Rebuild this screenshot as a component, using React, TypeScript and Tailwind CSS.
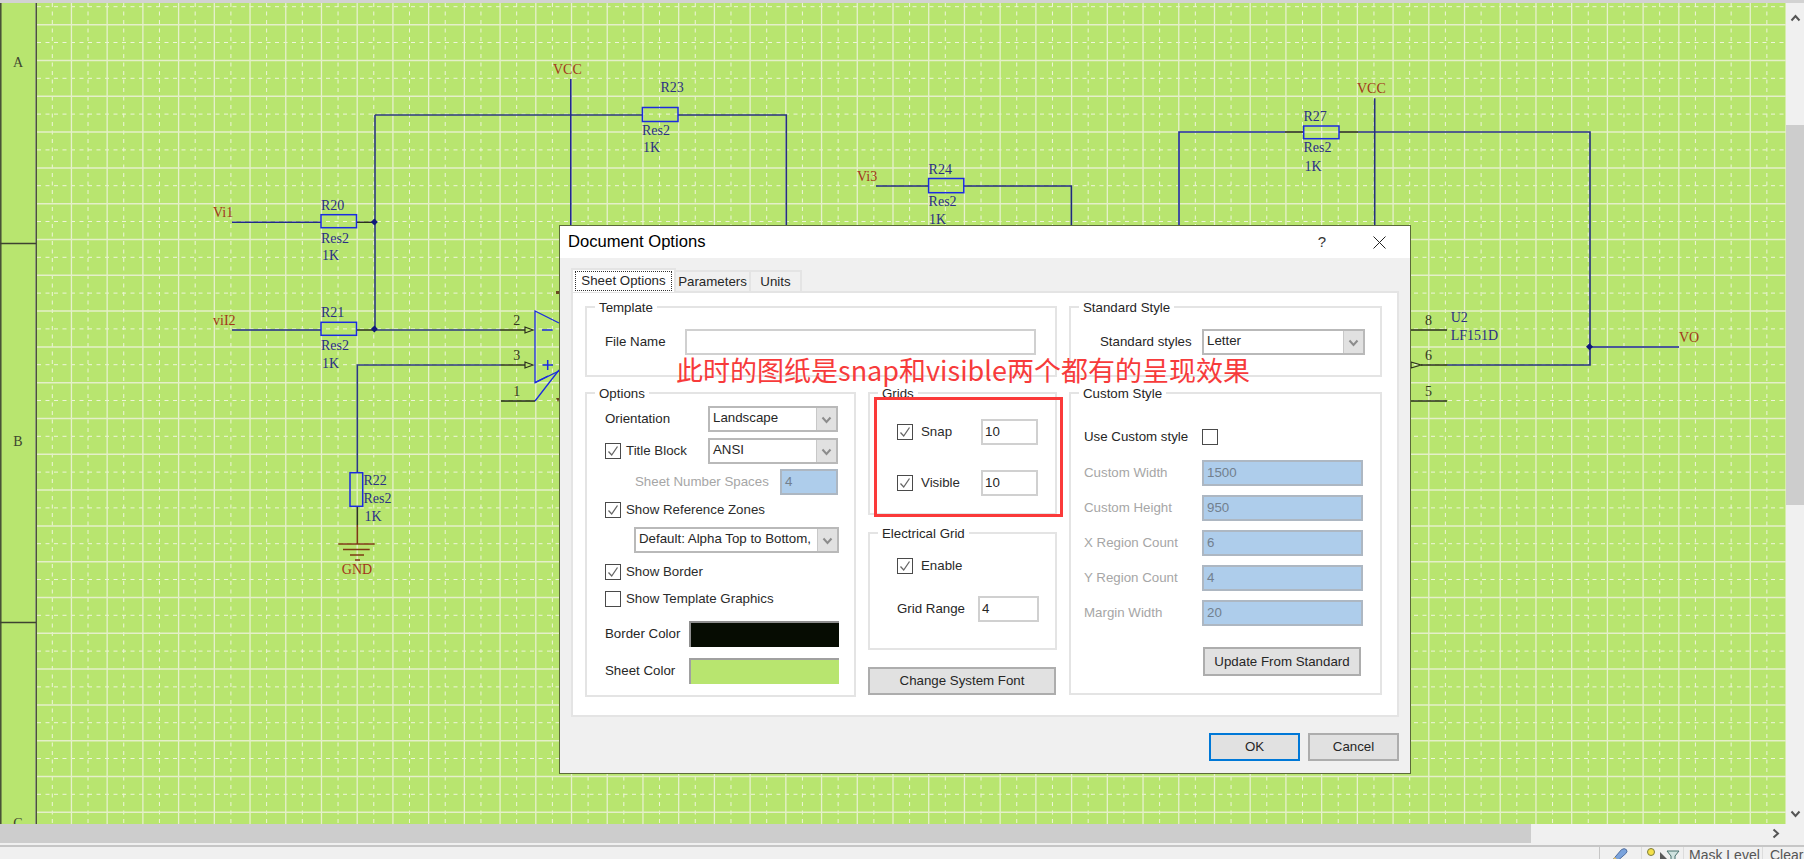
const ui = { fontFamily: '"Liberation Sans", Arial, sans-serif' };

const W = 1786;
const H = 824;
const vSolid = Array.from({ length: 50 }, (_, i) => 35.72 * (i + 1));
const vDash = Array.from({ length: 49 }, (_, i) => 52.3 + 35.72 * i);
const hSolid = Array.from({ length: 23 }, (_, i) => 24.7 + 35.8 * i);
const hDash = Array.from({ length: 23 }, (_, i) => 6.7 + 35.8 * i);

const NAVY = "#2a2f85";
const BRIGHT = "#1a2be0";
const RED = "#a2351a";
const DARK = "#33381f";

function Res({ x, y, w = 35.5, h = 13 }: { x: number; y: number; w?: number; h?: number }) {
  return <rect x={x} y={y} width={w} height={h} fill="none" stroke={BRIGHT} strokeWidth="1.5" />;
}

function Junction({ x, y }: { x: number; y: number }) {
  return <path d={`M${x - 3.5} ${y} L${x} ${y - 3.5} L${x + 3.5} ${y} L${x} ${y + 3.5} Z`} fill="#10187a" />;
}

function Label({ x, y, c = NAVY, t, anchor }: { x: number; y: number; c?: string; t: string; anchor?: "middle" }) {
  return (
    <text x={x} y={y + 1} fill={c} fontSize="14" fontFamily='"Liberation Serif", serif' textAnchor={anchor} dominantBaseline="middle">
      {t}
    </text>
  );
}

function Schematic() {
  return (
    <svg width={W} height={H - 3} viewBox={`0 3 ${W} ${H - 3}`} className="block">
      {vDash.map((x) => (
        <line key={x} x1={x} x2={x} y1={3} y2={H} stroke="#eef5d9" strokeWidth="1" strokeDasharray="4 4.5" />
      ))}
      {hDash.map((y) => (
        <line key={y} x1={37} x2={W} y1={y} y2={y} stroke="#eef5d9" strokeWidth="1" strokeDasharray="4 4.5" />
      ))}
      {vSolid.map((x) => (
        <line key={x} x1={x} x2={x} y1={3} y2={H} stroke="#e6f0cd" strokeWidth="1.3" />
      ))}
      {hSolid.map((y) => (
        <line key={y} x1={37} x2={W} y1={y} y2={y} stroke="#e4efc8" strokeWidth="1.5" />
      ))}

      {/* reference zones */}
      <g stroke="#3d4230" strokeWidth="1.4" fill="none">
        <line x1={0.8} x2={0.8} y1={3} y2={H} />
        <line x1={36.2} x2={36.2} y1={3} y2={H} />
        <line x1={0} x2={36} y1={243.5} y2={243.5} />
        <line x1={0} x2={36} y1={622.5} y2={622.5} />
      </g>
      <g fill="#3f4530" fontSize="14" fontFamily='"Liberation Serif", serif' textAnchor="middle" dominantBaseline="middle">
        <text x={18} y={64}>A</text>
        <text x={18} y={443}>B</text>
        <text x={18} y={825}>C</text>
      </g>

      {/* wires */}
      <g fill="none" strokeWidth="1.6">
        <path d="M232 222.3H321M232 330H321" stroke="#1f2a8a" />
        <path d="M357 222.3H375M357 330H375" stroke="#2a2f20" />
        <path d="M375 115V330H500M375 115H642" stroke="#2c3a80" />
        <path d="M500 330H525M501 365H525" stroke="#2e3320" />
        <path d="M357.3 472.7V365H501" stroke="#2c3a80" />
        <path d="M357.3 506V525" stroke="#2e3320" />
        <path d="M357.3 525V544" stroke="#7c3a12" />
        <path d="M338.3 544H374.7M343 549.5H369.7M350 555H364M355 560H360" stroke="#7c3a12" />
        <path d="M501 401H535" stroke="#1f2415" />
        <path d="M678 115H786.3V225" stroke="#27307f" />
        <path d="M570.8 79V225" stroke="#1f2a8a" />
        <path d="M876 186H928.6M964 186H1071.4V225" stroke="#1f2a7e" />
        <path d="M1179 225V132H1285" stroke="#1f2a9a" />
        <path d="M1285 132H1303.7M1339 132H1358" stroke="#1f2415" />
        <path d="M1358 132H1590V365H1447" stroke="#25307f" />
        <path d="M1374.7 98.3V225" stroke="#25307f" />
        <path d="M1590 347H1679" stroke="#1a2590" />
        <path d="M1411 330H1447M1421 365H1447M1411 401H1447" stroke="#2a2f1c" />
      </g>

      <Res x={321} y={214.7} />
      <Res x={321} y={322.3} />
      <Res x={350} y={472.7} w={12.7} h={33.6} />
      <Res x={642.4} y={107.5} w={35.6} h={14} />
      <Res x={928.6} y={178.5} w={35.2} h={14.2} />
      <Res x={1303.7} y={126} w={35.3} h={12.7} />

      <Junction x={374.4} y={222} />
      <Junction x={374.4} y={329} />
      <Junction x={1589.5} y={346.7} />

      {/* op amp */}
      <g fill="none" stroke={BRIGHT} strokeWidth="1.3">
        <path d="M559 323L535 311V382.7L559 371" />
        <path d="M535 401L559 370M535 382.7L548 376" />
        <path d="M542 330H552.7M542.5 365H553M547.7 360V370" strokeWidth="1.5" />
      </g>
      <g fill="none" stroke="#2a2f1c" strokeWidth="1.2">
        <path d="M525 327V333L533 330Z" />
        <path d="M525 362V368L533 365Z" />
        <path d="M1411 362V368L1421 365Z" />
      </g>
      <path d="M556 291h4v3h-4zM556 398h4l-2 4z" fill="#6a4a20" />

      {/* labels */}
      <Label x={213} y={213} c={RED} t="Vi1" />
      <Label x={213} y={321} c={RED} t="viI2" />
      <Label x={321} y={206} t="R20" />
      <Label x={321} y={238.5} t="Res2" />
      <Label x={322} y={256} t="1K" />
      <Label x={321} y={313} t="R21" />
      <Label x={321} y={346} t="Res2" />
      <Label x={322} y={363.5} t="1K" />
      <Label x={363.5} y={481} t="R22" />
      <Label x={363.5} y={498.5} t="Res2" />
      <Label x={364.5} y={517} t="1K" />
      <Label x={357} y={570} c={RED} t="GND" anchor="middle" />
      <Label x={516.7} y={320.5} c="#33381f" t="2" anchor="middle" />
      <Label x={516.7} y={355.5} c="#33381f" t="3" anchor="middle" />
      <Label x={516.7} y={392} c="#33381f" t="1" anchor="middle" />
      <Label x={553} y={69.5} c={RED} t="VCC" />
      <Label x={660.5} y={88} t="R23" />
      <Label x={642} y={131} t="Res2" />
      <Label x={643} y={148} t="1K" />
      <Label x={857} y={176.7} c={RED} t="Vi3" />
      <Label x={928.6} y={169.5} t="R24" />
      <Label x={928.6} y={202} t="Res2" />
      <Label x={929} y={220} t="1K" />
      <Label x={1303.5} y={117} t="R27" />
      <Label x={1303.5} y={148} t="Res2" />
      <Label x={1304.5} y={167} t="1K" />
      <Label x={1357} y={88.5} c={RED} t="VCC" />
      <Label x={1428.4} y={320.5} c={DARK} t="8" anchor="middle" />
      <Label x={1428.4} y={355.5} c={DARK} t="6" anchor="middle" />
      <Label x={1428.4} y={391.7} c={DARK} t="5" anchor="middle" />
      <Label x={1450.7} y={318} t="U2" />
      <Label x={1450.7} y={336} t="LF151D" />
      <Label x={1679} y={338} c={RED} t="VO" />
    </svg>
  );
}

function Chevron({ dir, className }: { dir: "up" | "down" | "right"; className?: string }) {
  const d = dir === "up" ? "M1.5 7.5L5.5 3L9.5 7.5" : dir === "down" ? "M1.5 3.5L5.5 8L9.5 3.5" : "M3.5 1.5L8 5.5L3.5 9.5";
  return (
    <svg width="11" height="11" viewBox="0 0 11 11" className={className}>
      <path d={d} fill="none" stroke="#555" strokeWidth="2" />
    </svg>
  );
}

function Group({ title, className, children }: { title: string; className: string; children: React.ReactNode }) {
  return (
    <fieldset className={`border-2 border-[#e4e4e4] ${className}`}>
      <legend className="ml-[8px] translate-y-[1px] px-[4px] text-[13.3px] leading-[16px] text-[#262626]">{title}</legend>
      {children}
    </fieldset>
  );
}

function Check({ on, disabled }: { on?: boolean; disabled?: boolean }) {
  return (
    <span className="flex h-[16px] w-[16px] shrink-0 items-center justify-center border-[1.5px] border-[#4a4a4a] bg-white">
      {on && (
        <svg width="12" height="12" viewBox="0 0 12 12">
          <path d="M1.5 6.5L4.7 10L10.5 1.5" fill="none" stroke={disabled ? "#999" : "#666"} strokeWidth="1.3" />
        </svg>
      )}
    </span>
  );
}

function CheckRow({ label, on, className, wide }: { label: string; on?: boolean; className?: string; wide?: boolean }) {
  return (
    <div className={`flex h-[16px] items-center ${wide ? "gap-[8px]" : "gap-[5px]"} text-[13.3px] text-[#2b2b2b] ${className ?? ""}`}>
      <Check on={on} />
      <span>{label}</span>
    </div>
  );
}

function Combo({ value, className }: { value: string; className: string }) {
  return (
    <div className={`flex h-[26px] items-stretch border-2 border-[#b9b9b9] bg-white text-[13.3px] text-[#262626] ${className}`}>
      <span className="flex-1 truncate pl-[3px] leading-[20px]">{value}</span>
      <span className="flex w-[20px] shrink-0 items-center justify-center border-l border-[#c8c8c8] bg-[#e1e1e1]">
        <Chevron dir="down" className="opacity-60" />
      </span>
    </div>
  );
}

function TextBox({ value, className }: { value?: string; className: string }) {
  return (
    <div className={`h-[26px] border-2 border-[#d0d0d0] bg-white pl-[2px] text-[13.3px] leading-[21px] text-[#262626] ${className}`}>
      {value}
    </div>
  );
}

function Disabled({ value, className }: { value: string; className: string }) {
  return (
    <div className={`h-[26px] border-2 border-[#adb7c2] bg-[#aecdeb] pl-[3px] text-[13.3px] leading-[21px] text-[#72808e] ${className}`}>
      {value}
    </div>
  );
}

function Btn({ label, className }: { label: string; className: string }) {
  return (
    <div className={`flex items-center justify-center border-2 border-[#adadad] bg-[#e1e1e1] text-[13.3px] text-[#262626] ${className}`}>
      {label}
    </div>
  );
}

function CustomRow({ label, value }: { label: string; value: string }) {
  return (
    <div className="flex h-[26px] items-center text-[13.3px] text-[#a6a6a6]">
      <span className="w-[118px]">{label}</span>
      <Disabled value={value} className="w-[161px]" />
    </div>
  );
}

function DocumentOptions() {
  return (
    <div style={ui} className="absolute left-[559px] top-[225px] flex h-[549px] w-[852px] flex-col border border-[#5c6b3a] bg-[#f0f0f0]">
      <div className="flex h-[32px] items-center bg-white pl-[8px] pr-[24px] text-[16.6px] text-black">
        <span>Document Options</span>
        <span className="ml-auto mr-[47px] text-[15px] text-[#333]">?</span>
        <svg width="13" height="13" viewBox="0 0 13 13">
          <path d="M0.5 0.5L12.5 12.5M12.5 0.5L0.5 12.5" stroke="#222" strokeWidth="1" fill="none" />
        </svg>
      </div>

      <div className="flex flex-1 flex-col pl-[11px] pr-[11px] pt-[10px]">
        <div className="relative z-10 -mb-[1px] flex h-[24px] items-end text-[13.3px] text-[#262626]">
          <div className="flex h-[24px] w-[105px] items-center justify-center border-2 border-b-0 border-[#e4e4e4] bg-white">
            <span className="border border-dotted border-[#333] px-[5px] leading-[18px]">Sheet Options</span>
          </div>
          <div className="flex h-[22px] w-[75px] items-center justify-center border-t-2 border-r-2 border-[#e4e4e4]">Parameters</div>
          <div className="flex h-[22px] w-[51px] items-center justify-center border-t-2 border-r-2 border-[#e4e4e4]">Units</div>
        </div>

        <div className="flex h-[426px] flex-col gap-[8px] border-2 border-[#e4e4e4] bg-white pl-[12px] pt-[6px]">
          <div className="flex gap-[12px]">
            <Group title="Template" className="h-[78px] w-[472px]">
              <div className="flex items-center pl-[18px] pt-[14px] text-[13.3px] text-[#262626]">
                <span className="w-[80px]">File Name</span>
                <TextBox className="w-[351px] border-[#bcbcbc]" />
              </div>
            </Group>
            <Group title="Standard Style" className="h-[78px] w-[313px]">
              <div className="flex items-center pl-[29px] pt-[14px] text-[13.3px] text-[#262626]">
                <span className="w-[102px]">Standard styles</span>
                <Combo value="Letter" className="w-[163px]" />
              </div>
            </Group>
          </div>

          <div className="flex gap-[12px]">
            <Group title="Options" className="h-[312px] w-[271px]">
              <div className="flex flex-col pl-[18px] pr-[14px] pt-[5px] text-[13.3px] text-[#262626]">
                <div className="flex items-center">
                  <span className="w-[103px]">Orientation</span>
                  <Combo value="Landscape" className="w-[130px]" />
                </div>
                <div className="mt-[6px] flex items-center">
                  <div className="w-[103px]">
                    <CheckRow label="Title Block" on />
                  </div>
                  <Combo value="ANSI" className="w-[130px]" />
                </div>
                <div className="mt-[5px] flex items-center pl-[30px]">
                  <span className="w-[145px] text-[#a6a6a6]">Sheet Number Spaces</span>
                  <Disabled value="4" className="w-[58px]" />
                </div>
                <CheckRow label="Show Reference Zones" on className="mt-[7px]" />
                <Combo value="Default: Alpha Top to Bottom," className="mt-[9px] ml-[29px] w-[205px]" />
                <CheckRow label="Show Border" on className="mt-[11px]" />
                <CheckRow label="Show Template Graphics" className="mt-[11px]" />
                <div className="mt-[14px] flex items-center">
                  <span className="w-[84px]">Border Color</span>
                  <div className="h-[26px] w-[150px] border-l-2 border-t-2 border-[#8f8f8f] bg-[#060c02]" />
                </div>
                <div className="mt-[11px] flex items-center">
                  <span className="w-[84px]">Sheet Color</span>
                  <div className="h-[26px] w-[150px] border-l-2 border-t-2 border-[#a0a0a0] bg-[#b8e56f]" />
                </div>
              </div>
            </Group>

            <div className="flex w-[189px] flex-col">
              <Group title="Grids" className="h-[130px] w-[189px]">
                <div className="flex flex-col gap-[25px] pl-[27px] pt-[18px] text-[13.3px] text-[#262626]">
                  <div className="flex items-center">
                    <div className="w-[84px]">
                      <CheckRow label="Snap" on wide />
                    </div>
                    <TextBox value="10" className="w-[57px]" />
                  </div>
                  <div className="flex items-center">
                    <div className="w-[84px]">
                      <CheckRow label="Visible" on wide />
                    </div>
                    <TextBox value="10" className="w-[57px]" />
                  </div>
                </div>
              </Group>
              <Group title="Electrical Grid" className="mt-[10px] h-[125px] w-[189px]">
                <div className="flex flex-col pl-[27px] pt-[17px] text-[13.3px] text-[#262626]">
                  <CheckRow label="Enable" on wide />
                  <div className="mt-[22px] flex items-center">
                    <span className="w-[81px]">Grid Range</span>
                    <TextBox value="4" className="w-[61px]" />
                  </div>
                </div>
              </Group>
              <Btn label="Change System Font" className="mt-[17px] h-[28px] w-[188px]" />
            </div>

            <Group title="Custom Style" className="h-[310px] w-[313px]">
              <div className="flex flex-col pl-[13px] pt-[28px]">
                <div className="flex h-[16px] items-center text-[13.3px] text-[#262626]">
                  <span className="w-[118px]">Use Custom style</span>
                  <Check />
                </div>
                <div className="mt-[15px] flex flex-col gap-[9px]">
                  <CustomRow label="Custom Width" value="1500" />
                  <CustomRow label="Custom Height" value="950" />
                  <CustomRow label="X Region Count" value="6" />
                  <CustomRow label="Y Region Count" value="4" />
                  <CustomRow label="Margin Width" value="20" />
                </div>
                <Btn label="Update From Standard" className="ml-[119px] mt-[21px] h-[29px] w-[158px]" />
              </div>
            </Group>
          </div>
        </div>

        <div className="mt-[16px] flex justify-end gap-[8px]">
          <Btn label="OK" className="h-[28px] w-[91px] !border-[#0078d7]" />
          <Btn label="Cancel" className="h-[28px] w-[91px]" />
        </div>
      </div>

      {/* annotation drawn on top of the dialog */}
      <div className="absolute left-[314px] top-[171px] h-[120px] w-[189px] border-[3px] border-[#fb3a3a]" />
      <div
        className="absolute left-[116px] top-[125px] whitespace-nowrap text-[27px] leading-[38px] text-[#f73b3b]"
        style={{ fontFamily: '"Noto Sans CJK SC", "Noto Sans", sans-serif' }}
      >
        此时的图纸是snap和visible两个都有的呈现效果
      </div>
    </div>
  );
}

function StatusBar() {
  return (
    <div style={ui} className="flex h-[14px] items-start overflow-hidden border-t-2 border-[#c6c6c6] bg-[#f0f0f0] text-[14px] leading-[16px] text-[#555]">
      <div className="h-full w-[1600px] border-r border-[#c6c6c6]" />
      <svg width="42" height="14" viewBox="0 0 42 14" className="shrink-0 border-r border-[#dcdcdc]">
        <path d="M13 13L22 2.5Q25 0.5 27 2.5Q28.5 4.5 26.5 6.5L18 14Z" fill="#7aa3dc" stroke="#4f6c9c" />
        <path d="M13 13L15 10L18 13L16 15Z" fill="#e8c46c" />
      </svg>
      <svg width="41" height="14" viewBox="0 0 41 14" className="shrink-0">
        <circle cx="9" cy="5" r="3.5" fill="#f4e04a" stroke="#7d7d3c" />
        <path d="M18 5V14L25 12Z" fill="#5a5a5a" />
        <path d="M25 4H37L33 9V14H29V9Z" fill="#cfe2df" stroke="#47706c" />
      </svg>
      <div className="w-[80px] shrink-0 border-x border-[#dcdcdc] pl-[5px]">Mask Level</div>
      <div className="shrink-0 pl-[7px]">Clear</div>
    </div>
  );
}

export default function App() {
  return (
    <div className="relative flex h-[859px] w-[1804px] flex-col overflow-hidden bg-[#f0f0f0]">
      <div className="h-[3px] bg-[#d2d2d2]" />
      <div className="flex h-[821px]">
        <div className="w-[1786px] overflow-hidden bg-[#b8e56f]">
          <Schematic />
        </div>
        <div className="flex w-[18px] flex-col items-center bg-[#f0f0f0]">
          <Chevron dir="up" className="mt-[10px]" />
          <div className="mt-[101px] h-[380px] w-full bg-[#cdcdcd]" />
          <Chevron dir="down" className="mt-auto mb-[5px]" />
        </div>
      </div>
      <div className="flex h-[19px] items-center bg-[#f0f0f0]">
        <div className="h-full w-[1531px] bg-[#cdcdcd]" />
        <Chevron dir="right" className="ml-[239px]" />
      </div>
      <div className="h-[2px]" />
      <StatusBar />
      <DocumentOptions />
    </div>
  );
}
